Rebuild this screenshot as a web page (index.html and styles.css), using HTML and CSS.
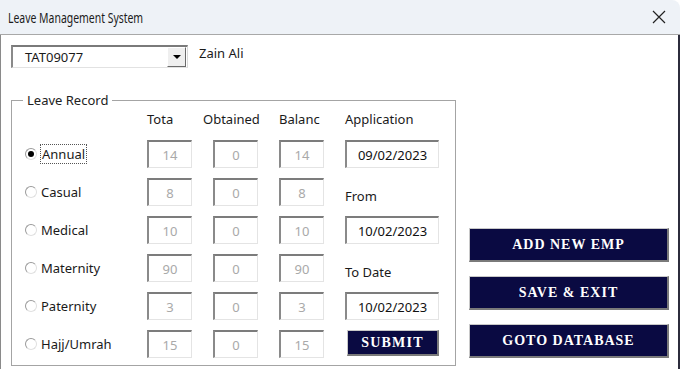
FILE: index.html
```html
<!DOCTYPE html>
<html lang="en">
<head>
    <meta charset="UTF-8">
    <title>Leave Management System</title>
    <link rel="stylesheet" href="styles.css">
</head>
<body>
<div class="window">
    <div class="titlebar">
        <span class="title">Leave Management System</span>
        <svg class="close" width="14" height="14" viewBox="0 0 14 14">
            <path d="M1 1 L13 13 M13 1 L1 13" stroke="#222" stroke-width="1.2" fill="none"/>
        </svg>
    </div>
    <div class="content">
        <div class="top-row">
            <div class="combo">
                <span class="combo-text">TAT09077</span>
                <span class="combo-btn"><span class="arrow"></span></span>
            </div>
            <span class="emp-name">Zain Ali</span>
        </div>
        <div class="main-row">
            <fieldset class="record">
                <legend>Leave Record</legend>
                <div class="grid">
                    <div></div>
                    <div class="head">Tota</div>
                    <div class="head shift">Obtained</div>
                    <div class="head">Balanc</div>
                    <div class="head">Application</div>

                    <label class="opt"><span class="radio checked"></span><span class="focus">Annual</span></label>
                    <div class="box">14</div>
                    <div class="box">0</div>
                    <div class="box">14</div>
                    <div class="box date">09/02/2023</div>

                    <label class="opt"><span class="radio"></span><span>Casual</span></label>
                    <div class="box">8</div>
                    <div class="box">0</div>
                    <div class="box">8</div>
                    <div class="cap">From</div>

                    <label class="opt"><span class="radio"></span><span>Medical</span></label>
                    <div class="box">10</div>
                    <div class="box">0</div>
                    <div class="box">10</div>
                    <div class="box date">10/02/2023</div>

                    <label class="opt"><span class="radio"></span><span>Maternity</span></label>
                    <div class="box">90</div>
                    <div class="box">0</div>
                    <div class="box">90</div>
                    <div class="cap">To Date</div>

                    <label class="opt"><span class="radio"></span><span>Paternity</span></label>
                    <div class="box">3</div>
                    <div class="box">0</div>
                    <div class="box">3</div>
                    <div class="box date">10/02/2023</div>

                    <label class="opt"><span class="radio"></span><span>Hajj/Umrah</span></label>
                    <div class="box">15</div>
                    <div class="box">0</div>
                    <div class="box">15</div>
                    <button class="navy submit">SUBMIT</button>
                </div>
            </fieldset>
            <div class="actions">
                <button class="navy big">ADD NEW EMP</button>
                <button class="navy big">SAVE &amp; EXIT</button>
                <button class="navy big">GOTO DATABASE</button>
            </div>
        </div>
    </div>
</div>
</body>
</html>
```

FILE: styles.css
```css
body {
    margin: 0;
    width: 680px;
    height: 369px;
    overflow: hidden;
    background: #fff;
    font-family: "Noto Sans", "Open Sans", sans-serif;
    font-size: 13px;
    color: #1a1a1a;
}
.window {
    height: 369px;
    display: flex;
    flex-direction: column;
}
.titlebar {
    height: 34px;
    background: #eef2f7;
    border-bottom: 1px solid #a8a8a8;
    border-top-right-radius: 8px;
    display: flex;
    align-items: center;
    justify-content: space-between;
    padding: 0 14px 0 8px;
}
.title {
    font-size: 14.5px;
    color: #1b1b1b;
    display: inline-block;
    transform: scaleX(0.72);
    transform-origin: left center;
}
.content {
    flex: 1;
    border-left: 1px solid #8a8a8a;
    border-right: 2px solid #2c2c3c;
    padding: 10px 0 0 10px;
}
.top-row {
    display: flex;
    align-items: flex-start;
    gap: 11px;
    height: 46px;
}
.combo {
    width: 174px;
    height: 20px;
    border-top: 2px solid #7a7a7a;
    border-left: 2px solid #8a8a8a;
    border-right: 1px solid #d8d8d8;
    border-bottom: 1px solid #e2e2e2;
    display: flex;
    align-items: center;
    justify-content: space-between;
}
.combo-text {
    padding-left: 12px;
}
.combo-btn {
    width: 17px;
    height: 18px;
    margin-right: 1px;
    background: #efefef;
    border-top: 1px solid #fff;
    border-left: 1px solid #fff;
    border-right: 1px solid #6a6a6a;
    border-bottom: 1px solid #6a6a6a;
    display: flex;
    align-items: center;
    justify-content: center;
}
.arrow {
    width: 0;
    height: 0;
    border-left: 4px solid transparent;
    border-right: 4px solid transparent;
    border-top: 4px solid #000;
}
.emp-name {
    line-height: 16px;
}
.main-row {
    display: flex;
    align-items: flex-end;
}
.record {
    margin: 0;
    width: 416px;
    border: 1px solid #a4a4a4;
    padding: 0 14px 7px 13px;
}
.record legend {
    margin-left: -2px;
    padding: 0 4px;
    line-height: 18px;
    color: #222;
}
.grid {
    display: grid;
    grid-template-columns: 101px 45px 45px 45px 94px;
    grid-template-rows: 21px repeat(6, 28px);
    column-gap: 21px;
    row-gap: 10px;
}
.head {
    line-height: 21px;
    white-space: nowrap;
}
.head.shift {
    margin-left: -10px;
}
.opt {
    display: flex;
    align-items: center;
    gap: 4px;
    white-space: nowrap;
}
.radio {
    width: 10px;
    height: 10px;
    border-radius: 50%;
    border: 1px solid #9a9a9a;
    border-right-color: #e0e0e0;
    border-bottom-color: #e0e0e0;
    display: flex;
    align-items: center;
    justify-content: center;
}
.radio.checked::after {
    content: "";
    width: 6px;
    height: 6px;
    border-radius: 50%;
    background: #000;
}
.focus {
    outline: 1px dotted #555;
    padding: 0 1px;
}
.box {
    border-top: 2px solid #7c7c7c;
    border-left: 2px solid #8a8a8a;
    border-right: 1px solid #e4e4e4;
    border-bottom: 1px solid #e4e4e4;
    color: #a9a9a9;
    display: flex;
    align-items: center;
    justify-content: center;
}
.box.date {
    color: #111;
}
.cap {
    display: flex;
    align-items: center;
    padding-top: 8px;
}
.navy {
    background: #0a0a42;
    color: #fff;
    font-family: "Liberation Serif", "DejaVu Serif", serif;
    font-weight: bold;
    border-top: 1px solid #c8c8c8;
    border-left: 1px solid #c8c8c8;
    border-right: 2px solid #7a7a7a;
    border-bottom: 2px solid #7a7a7a;
    padding: 0;
    cursor: pointer;
}
.submit {
    margin-left: 2px;
    font-size: 14px;
    letter-spacing: 1.2px;
    height: 26px;
}
.actions {
    display: flex;
    flex-direction: column;
    gap: 14px;
    margin-left: 13px;
    padding-bottom: 8px;
}
.big {
    width: 200px;
    height: 34px;
    font-size: 14px;
    letter-spacing: 1px;
}
```
